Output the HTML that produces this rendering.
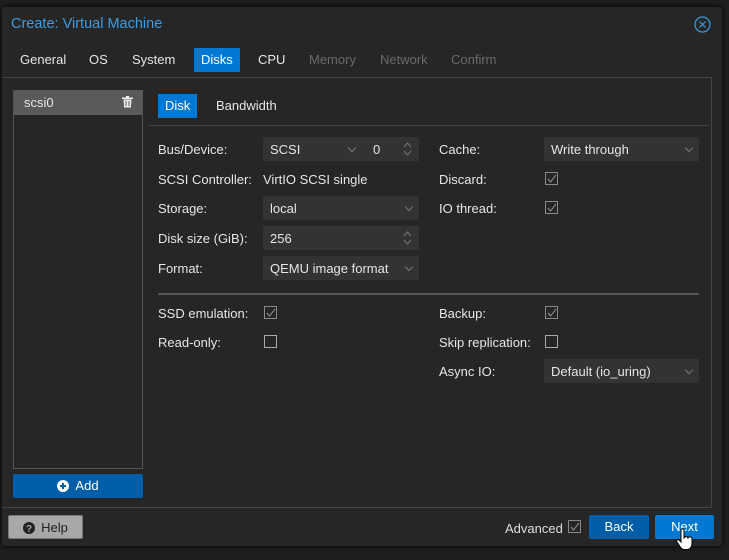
<!DOCTYPE html>
<html><head><style>
*{box-sizing:border-box;margin:0;padding:0}
body{width:729px;height:560px;background:#1e1e1e;font-family:"Liberation Sans",sans-serif;font-size:13px;color:#e6e6e6;position:relative;overflow:hidden}
.a{position:absolute}
.dlg{left:2px;top:7px;width:720px;height:539px;background:#262626;border-radius:3px;box-shadow:0 0 6px #000}
.title{left:11px;top:16px;font-size:14.5px;color:#3d9be0}
.tab{top:48px;height:24px;line-height:24px;padding:0 7px}
.dim{color:#6a6a6a}
.sel{background:#0078d4;color:#fff}
.panel{left:2px;top:77px;width:710px;height:431px;border-top:1px solid #444;border-bottom:1px solid #444;border-right:1px solid #444}
.inp{background:#333;height:24px;line-height:25px;padding-left:7px}
.chev{position:absolute;right:7px;top:8px;width:6px;height:6px;border-right:1px solid #777;border-bottom:1px solid #777;transform:rotate(45deg)}
.cb{width:13px;height:13px;border:1px solid #888}
.cb svg{display:block}
.lbl{left:158px}
.btn{height:24px;line-height:24px;text-align:center;border-radius:2px;color:#fff}
</style></head><body>
<div class="a dlg"></div>
<div class="a title">Create: Virtual Machine</div>
<svg class="a" style="left:694px;top:16px" width="17" height="17" viewBox="0 0 17 17"><circle cx="8.5" cy="8.5" r="7.5" fill="none" stroke="#3d9be0" stroke-width="1.2"/><path d="M5.5 5.5l6 6M11.5 5.5l-6 6" stroke="#3d9be0" stroke-width="1.2"/></svg>
<div class="a tab" style="left:13px">General</div>
<div class="a tab" style="left:82px">OS</div>
<div class="a tab" style="left:125px">System</div>
<div class="a tab sel" style="left:194px">Disks</div>
<div class="a tab" style="left:251px">CPU</div>
<div class="a tab dim" style="left:302px">Memory</div>
<div class="a tab dim" style="left:373px">Network</div>
<div class="a tab dim" style="left:444px">Confirm</div>
<div class="a panel"></div>
<div class="a" style="left:13px;top:90px;width:130px;height:379px;border:1px solid #555"></div>
<div class="a" style="left:14px;top:91px;width:128px;height:24px;background:#5a5a5a;line-height:24px;padding-left:10px">scsi0</div>
<svg class="a" style="left:122px;top:96px" width="11" height="12" viewBox="0 0 11 12"><rect x="0" y="1.5" width="11" height="1.5" fill="#eee"/><rect x="4" y="0" width="3" height="2" fill="#eee"/><path d="M1.5 3.5h8l-.6 8h-6.8z" fill="#eee"/><path d="M4 5v5M7 5v5" stroke="#5a5a5a"/></svg>
<div class="a btn" style="left:13px;top:474px;width:130px;background:#005ea8"><svg style="vertical-align:-2px;margin-right:6px" width="12" height="12" viewBox="0 0 12 12"><circle cx="6" cy="6" r="6" fill="#fff"/><path d="M6 3v6M3 6h6" stroke="#005ea8" stroke-width="2"/></svg>Add</div>
<div class="a tab sel" style="left:158px;top:94px">Disk</div>
<div class="a tab" style="left:209px;top:94px">Bandwidth</div>
<div class="a" style="left:148px;top:125px;width:561px;height:1px;background:#444"></div>
<div class="a lbl" style="top:142px">Bus/Device:</div>
<div class="a inp" style="left:263px;top:137px;width:156px">SCSI<div class="chev" style="right:64px"></div>
<span style="position:absolute;left:110px">0</span>
<svg style="position:absolute;right:7px;top:4px" width="9" height="16" viewBox="0 0 9 16"><path d="M1 6l3.5-4 3.5 4M1 10l3.5 4 3.5-4" fill="none" stroke="#777"/></svg></div>
<div class="a lbl" style="top:172px">SCSI Controller:</div>
<div class="a" style="left:263px;top:172px">VirtIO SCSI single</div>
<div class="a lbl" style="top:201px">Storage:</div>
<div class="a inp" style="left:263px;top:196px;width:156px">local<div class="chev"></div></div>
<div class="a lbl" style="top:231px">Disk size (GiB):</div>
<div class="a inp" style="left:263px;top:226px;width:156px">256
<svg style="position:absolute;right:7px;top:4px" width="9" height="16" viewBox="0 0 9 16"><path d="M1 6l3.5-4 3.5 4M1 10l3.5 4 3.5-4" fill="none" stroke="#777"/></svg></div>
<div class="a lbl" style="top:261px">Format:</div>
<div class="a inp" style="left:263px;top:256px;width:156px;white-space:nowrap;overflow:hidden">QEMU image format<div class="chev"></div></div>
<div class="a" style="left:439px;top:142px">Cache:</div>
<div class="a inp" style="left:544px;top:137px;width:155px">Write through<div class="chev"></div></div>
<div class="a" style="left:439px;top:172px">Discard:</div>
<div class="a" style="left:439px;top:201px">IO thread:</div>
<div class="a" style="left:158px;top:293px;width:541px;height:2px;background:#555"></div>
<div class="a lbl" style="top:306px">SSD emulation:</div>
<div class="a lbl" style="top:335px">Read-only:</div>
<div class="a" style="left:439px;top:306px">Backup:</div>
<div class="a" style="left:439px;top:335px">Skip replication:</div>
<div class="a" style="left:439px;top:364px">Async IO:</div>
<div class="a inp" style="left:544px;top:359px;width:155px">Default (io_uring)<div class="chev"></div></div>
<div class="a cb" style="left:545px;top:172px"><svg width="11" height="11"><path d="M2 6l2.5 3L10 2" fill="none" stroke="#999"/></svg></div>
<div class="a cb" style="left:545px;top:201px"><svg width="11" height="11"><path d="M2 6l2.5 3L10 2" fill="none" stroke="#999"/></svg></div>
<div class="a cb" style="left:264px;top:306px"><svg width="11" height="11"><path d="M2 6l2.5 3L10 2" fill="none" stroke="#999"/></svg></div>
<div class="a cb" style="left:264px;top:335px;border-color:#aaa"></div>
<div class="a cb" style="left:545px;top:306px"><svg width="11" height="11"><path d="M2 6l2.5 3L10 2" fill="none" stroke="#999"/></svg></div>
<div class="a cb" style="left:545px;top:335px;border-color:#aaa"></div>
<div class="a btn" style="left:8px;top:515px;width:75px;background:#a8a8a8;color:#222;border:1px solid #777"><svg style="vertical-align:-2px;margin-right:6px" width="12" height="12" viewBox="0 0 12 12"><circle cx="6" cy="6" r="6" fill="#222"/><text x="6" y="10" font-size="10" font-weight="bold" text-anchor="middle" fill="#a8a8a8" font-family="Liberation Sans">?</text></svg>Help</div>
<div class="a" style="left:505px;top:521px;color:#ddd">Advanced</div>
<div class="a cb" style="left:568px;top:520px"><svg width="11" height="11"><path d="M2 6l2.5 3L10 2" fill="none" stroke="#999"/></svg></div>
<div class="a btn" style="left:589px;top:515px;width:60px;background:#005ea8">Back</div>
<div class="a btn" style="left:655px;top:515px;width:59px;background:#0078d4">Next</div>
<svg class="a" style="left:676px;top:528px" width="20" height="24" viewBox="0 0 20 24"><path d="M5 2c0-1.5 3-1.5 3 0v8l1-1c1-1 3 0 3 1l1-1c1-.5 3 0 3 1.5v5c0 3-2 6-5 6H8c-2 0-3-1-4-3L1 14c-1-2 1-3 2-2l2 2z" fill="#fff" stroke="#000"/></svg>
</body></html>
